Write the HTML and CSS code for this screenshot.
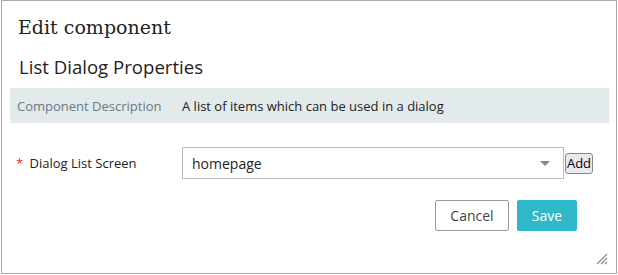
FILE: index.html
```html
<!DOCTYPE html>
<html lang="en">
<head>
  <meta charset="UTF-8" />
  <title>Edit component</title>
  <link rel="stylesheet" href="styles.css">
</head>
<body>
  <div class="dialog">
    <h1 class="title">Edit component</h1>
    <div class="content">
      <h2 class="subtitle">List Dialog Properties</h2>
      <div class="desc">
        <span class="desc-label">Component Description</span>
        <span class="desc-text">A list of items which can be used in a dialog</span>
      </div>
      <div class="field">
        <label class="field-label"><span class="req">*</span> Dialog List Screen</label>
        <div class="select">
          <span>homepage</span>
          <span class="caret"></span>
        </div>
        <button class="add">Add</button>
      </div>
      <div class="actions">
        <button class="btn btn-cancel">Cancel</button>
        <button class="btn btn-save">Save</button>
      </div>
    </div>
    <svg class="grip" width="12" height="12" viewBox="0 0 12 12">
      <path d="M11 1 L1 11 M11 5 L5 11 M11 9 L9 11" stroke="#888" stroke-width="1.2" fill="none"/>
    </svg>
  </div>
</body>
</html>
```

FILE: styles.css
```css
* {
  box-sizing: border-box;
}
body {
  margin: 0;
  font-family: 'Open Sans', sans-serif;
  color: #222;
}
.dialog {
  position: relative;
  margin-left: 1px;
  width: 616px;
  height: 274px;
  border: 1px solid #aaa;
  background: #fff;
}
.title {
  margin: 0;
  padding: 13px 0 0 16px;
  font-family: 'DejaVu Serif', serif;
  font-weight: normal;
  font-size: 19px;
  line-height: 26px;
  color: #222;
}
.content {
  padding: 0 7px 0 8px;
}
.subtitle {
  margin: 0;
  padding: 15px 0 0 9px;
  font-weight: normal;
  font-size: 18.6px;
  line-height: 23px;
  color: #222;
}
.desc {
  display: flex;
  align-items: center;
  margin-top: 10px;
  height: 35px;
  background: #e2eaec;
  font-size: 13px;
}
.desc-label {
  width: 172px;
  padding-left: 7px;
  color: #6c7880;
}
.desc-text {
  color: #222;
}
.field {
  display: flex;
  align-items: center;
  margin-top: 24px;
  font-size: 13px;
}
.field-label {
  width: 172px;
  padding-left: 6px;
}
.req {
  color: #e0303a;
  margin-right: 3px;
}
.select {
  display: flex;
  align-items: center;
  justify-content: space-between;
  width: 382px;
  height: 32px;
  padding: 0 13px 0 9px;
  border: 1px solid #bbb;
  font-size: 14px;
}
.caret {
  width: 0;
  height: 0;
  border-left: 5px solid transparent;
  border-right: 5px solid transparent;
  border-top: 5px solid #888;
}
.add {
  margin-left: 1px;
  width: 28px;
  height: 21px;
  padding: 0;
  font-family: 'Open Sans', sans-serif;
  font-size: 13px;
  color: #000;
  background: #e8e8ee;
  border: 1px solid #888;
  border-radius: 3px;
}
.actions {
  display: flex;
  justify-content: flex-end;
  gap: 8px;
  margin-top: 21px;
  padding-right: 32px;
}
.btn {
  height: 31px;
  font-family: 'Open Sans', sans-serif;
  font-size: 14px;
  border-radius: 2px;
}
.btn-cancel {
  width: 74px;
  background: #fff;
  border: 1px solid #999;
  color: #444;
}
.btn-save {
  width: 60px;
  background: #31b8c8;
  border: 1px solid #31b8c8;
  color: #fff;
}
.grip {
  position: absolute;
  right: 8px;
  bottom: 8px;
}
```
